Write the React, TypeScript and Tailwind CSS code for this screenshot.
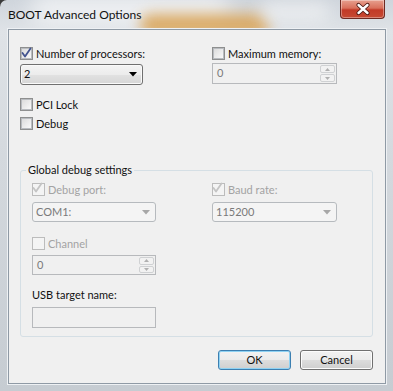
import React from "react";

const checkPath = "M2.5 6 L5 9.5 L10.5 1.5";

function CheckBox({ checked = false, disabled = false }: { checked?: boolean; disabled?: boolean }) {
  return (
    <span
      className={`flex h-[13px] w-[13px] shrink-0 items-center justify-center border ${
        disabled ? "border-[#bcbcbc] bg-[#f4f4f4]" : "border-[#8e8f8f] bg-white"
      }`}
    >
      <span
        className={`relative h-[11px] w-[11px] ${
          disabled
            ? "bg-[#f4f4f4]"
            : "border border-[#b9bcc0] bg-[linear-gradient(135deg,#dcdcdc,#f9f9f9)]"
        }`}
      >
        {checked && (
          <svg width="13" height="13" viewBox="0 0 13 13" className="absolute left-[-2px] top-[-2px]">
            <path
              d={checkPath}
              fill="none"
              stroke={disabled ? "#c4c4c4" : "#43548f"}
              strokeWidth="1.8"
              strokeLinecap="round"
              strokeLinejoin="round"
            />
          </svg>
        )}
      </span>
    </span>
  );
}

function CheckRow({ label, checked, disabled }: { label: string; checked?: boolean; disabled?: boolean }) {
  return (
    <div className="flex h-[13px] items-center gap-[3px]">
      <CheckBox checked={checked} disabled={disabled} />
      <span className={`leading-[13px] ${disabled ? "text-[#a3a3a3]" : "text-[#111]"}`}>{label}</span>
    </div>
  );
}

function Combo({ value, disabled = false, w }: { value: string; disabled?: boolean; w: string }) {
  return (
    <div
      className={`flex items-center justify-between rounded-[3px] border pl-[3px] pr-[5px] ${w} ${
        disabled
          ? "h-[20px] border-[#b6babe] bg-[#f4f4f4] text-[#7a7a7a]"
          : "h-[21px] border-[#707070] bg-[linear-gradient(to_bottom,#f4f4f4_0%,#ececec_50%,#e2e2e2_50%,#d6d6d6_100%)] text-[#111] shadow-[inset_0_0_0_1px_#fafafa]"
      }`}
    >
      <span>{value}</span>
      <svg width="8" height="5" viewBox="0 0 8 5">
        <path d="M0 0 H8 L4 4.5 Z" fill={disabled ? "#a7a7a7" : "#000"} />
      </svg>
    </div>
  );
}

function Spin({ value, w, h }: { value: string; w: string; h: string }) {
  return (
    <div className={`flex items-stretch border border-[#b7b9bc] bg-[#f0f0f0] ${w} ${h}`}>
      <span className="flex flex-1 items-center pl-[4px] text-[#7a7a7a]">{value}</span>
      <div className="flex w-[17px] flex-col gap-[1px] p-[1px]">
        <div className="flex flex-1 items-center justify-center rounded-[2px] border border-[#cfd1d3] bg-[#f2f2f2]">
          <svg width="5" height="3" viewBox="0 0 5 3">
            <path d="M0 3 L2.5 0 L5 3 Z" fill="#b0b0b0" />
          </svg>
        </div>
        <div className="flex flex-1 items-center justify-center rounded-[2px] border border-[#cfd1d3] bg-[#f2f2f2]">
          <svg width="5" height="3" viewBox="0 0 5 3">
            <path d="M0 0 H5 L2.5 3 Z" fill="#b0b0b0" />
          </svg>
        </div>
      </div>
    </div>
  );
}

function Button({ children, primary = false }: { children: React.ReactNode; primary?: boolean }) {
  return (
    <button
      className={`flex h-[20px] w-[73px] items-center justify-center rounded-[3px] border bg-[linear-gradient(to_bottom,#f2f2f2_0%,#ebebeb_50%,#dddddd_50%,#cfcfcf_100%)] text-[#111] ${
        primary
          ? "border-[#3c7fb1] shadow-[inset_0_0_0_1px_#8fd2f3]"
          : "border-[#707070] shadow-[inset_0_0_0_1px_#fcfcfc]"
      }`}
    >
      {children}
    </button>
  );
}

export default function App() {
  return (
    <div className="relative h-[391px] w-[393px] overflow-hidden bg-[#3b3b3b] font-['Lato',sans-serif] text-[11px] text-[#111]">
      <div className="absolute inset-0 rounded-tl-[7px] bg-[linear-gradient(to_bottom,#cfd5dc_0%,#dfe3e7_8%,#d4d9de_40%,#c6ccd2_100%)]" />
      <div className="absolute left-[30px] top-[-6px] h-[30px] w-[200px] rounded-full bg-white opacity-60 blur-[10px]" />
      <div className="absolute left-[140px] top-[14px] h-[22px] w-[130px] rounded-full bg-[#d99c45] opacity-80 blur-[7px]" />
      <div className="absolute left-[260px] top-[2px] h-[20px] w-[70px] rounded-full bg-[#eef0f2] opacity-80 blur-[8px]" />

      <div className="relative flex h-full flex-col pb-[6px] pl-[7px] pr-[6px]">
        <div className="flex h-[28px] items-start justify-between">
          <span className="pl-[1px] pt-[7px] text-[12px] leading-[16px] text-[#111]">BOOT Advanced Options</span>
          <div className="mr-[2px] h-[19px] w-[45px] overflow-hidden rounded-b-[4px] border border-t-0 border-[#6e2a22] bg-[linear-gradient(to_bottom,#e7a08f_0%,#d9705b_45%,#c23a27_55%,#c64a33_100%)] shadow-[inset_0_0_0_1px_rgba(255,255,255,0.35)]">
            <svg width="45" height="19" viewBox="0 0 45 19">
              <path d="M17.5 5 L26.5 13 M26.5 5 L17.5 13" stroke="#4a1712" strokeWidth="4.2" strokeLinecap="round" />
              <path d="M17.5 5 L26.5 13 M26.5 5 L17.5 13" stroke="#ffffff" strokeWidth="2.4" strokeLinecap="round" />
            </svg>
          </div>
        </div>

        <div className="flex flex-1 border border-[#eef1f4]">
          <div className="flex flex-1 flex-col border border-[#8f9aa5] bg-[#f0f0f0] pl-[11px] pr-[12px]">
            <div className="mt-[17px] flex">
              <div className="flex w-[192px] flex-col">
                <CheckRow label="Number of processors:" checked />
                <div className="mt-[4px]">
                  <Combo value="2" w="w-[123px]" />
                </div>
                <div className="mt-[13px]">
                  <CheckRow label="PCI Lock" />
                </div>
                <div className="mt-[6px]">
                  <CheckRow label="Debug" />
                </div>
              </div>
              <div className="flex w-[125px] flex-col">
                <CheckRow label="Maximum memory:" />
                <div className="mt-[3px]">
                  <Spin value="0" w="w-[125px]" h="h-[21px]" />
                </div>
              </div>
            </div>

            <fieldset className="mt-[33px] rounded-[3px] border border-[#d5dfe5] pb-[8px] pl-[11px] pt-[6px]">
              <legend className="ml-[-6px] px-[2px] leading-[14px]">Global debug settings</legend>
              <div className="flex">
                <div className="flex w-[180px] flex-col">
                  <CheckRow label="Debug port:" checked disabled />
                  <div className="mt-[6px]">
                    <Combo value="COM1:" disabled w="w-[124px]" />
                  </div>
                  <div className="mt-[15px]">
                    <CheckRow label="Channel" disabled />
                  </div>
                  <div className="mt-[5px]">
                    <Spin value="0" w="w-[124px]" h="h-[20px]" />
                  </div>
                </div>
                <div className="flex w-[125px] flex-col">
                  <CheckRow label="Baud rate:" checked disabled />
                  <div className="mt-[6px]">
                    <Combo value="115200" disabled w="w-[125px]" />
                  </div>
                </div>
              </div>
              <div className="mt-[13px] leading-[14px]">USB target name:</div>
              <div className="mt-[5px] h-[21px] w-[124px] border border-[#b7b9bc] bg-[#f0f0f0]" />
            </fieldset>

            <div className="mt-[13px] flex justify-end gap-[9px]">
              <Button primary>OK</Button>
              <Button>Cancel</Button>
            </div>
          </div>
        </div>
      </div>
    </div>
  );
}
